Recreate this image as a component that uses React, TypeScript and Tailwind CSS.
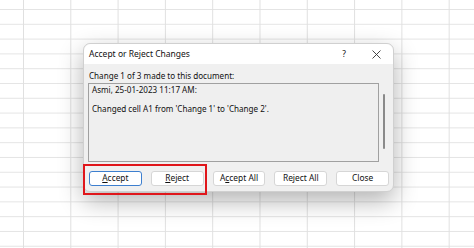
import React from "react";

function Btn({ children, focused = false }: { children: React.ReactNode; focused?: boolean }) {
  return (
    <div
      className={
        "w-[53px] h-[15px] flex items-center justify-center rounded-[3px] bg-white text-[8.4px] text-[#111]" +
        (focused
          ? " border border-[#3d7fcf] shadow-[inset_0_0_0_1px_#ffffff]"
          : " border border-[#d6d6d6]")
      }
    >
      {children}
    </div>
  );
}

export default function App() {
  return (
    <div
      className="w-[474px] h-[248px] overflow-hidden bg-white pl-[83px] pt-[43px] bg-[linear-gradient(to_right,#e0e0e0_1px,transparent_1px),linear-gradient(to_bottom,#e4e4e4_1px,transparent_1px)] bg-[size:47.3px_14.8px] bg-[position:23px_9px]"
      style={{ fontFamily: '"Noto Sans", "Open Sans", sans-serif' }}
    >
      <div className="relative w-[311px] h-[149px] rounded-[7px] border border-[#d0d0d0] bg-[#f0f0f0] shadow-[0_9px_24px_rgba(0,0,0,0.3)] flex flex-col">
        {/* title bar */}
        <div className="h-[20px] bg-white rounded-t-[7px] flex items-center pl-[5px] pr-[12px] text-[8.5px] text-[#111]">
          <span>Accept or Reject Changes</span>
          <span className="ml-auto w-[8px] text-center">?</span>
          <svg className="ml-[24px]" width="9" height="9" viewBox="0 0 9 9">
            <path d="M0.5 0.5 L8.5 8.5 M8.5 0.5 L0.5 8.5" stroke="#333" strokeWidth="0.9" />
          </svg>
        </div>

        {/* body */}
        <div className="flex-1 flex flex-col px-[4px] pt-[6px]">
          <div className="text-[8.1px] leading-[12px] pl-[1px] text-[#111]">
            Change 1 of 3 made to this document:
          </div>
          <div className="flex mt-[1px]">
            <div className="w-[291px] h-[79px] border border-[#a0a0a0] bg-[#efefef] px-[3px] text-[8.1px] leading-[12px] text-[#111]">
              <div>Asmi, 25-01-2023 11:17 AM:</div>
              <div className="mt-[7px]">Changed cell A1 from 'Change 1' to 'Change 2'.</div>
            </div>
            <div className="flex-1 flex justify-center pt-[11px]">
              <div className="w-[2px] h-[55px] bg-[#8a8a8a] rounded-full" />
            </div>
          </div>

          <div className="flex gap-[9px] mt-[9px] pl-[1px]">
            <Btn focused>
              <span><u>A</u>ccept</span>
            </Btn>
            <Btn>
              <span><u>R</u>eject</span>
            </Btn>
            <Btn>
              <span>A<u>c</u>cept All</span>
            </Btn>
            <Btn>
              <span>Re<u>j</u>ect All</span>
            </Btn>
            <Btn>
              <span>Close</span>
            </Btn>
          </div>
        </div>

        {/* highlight */}
        <div className="absolute left-[-1px] top-[120px] w-[124px] h-[31px] border-2 border-[#e0161b]" />
      </div>
    </div>
  );
}
